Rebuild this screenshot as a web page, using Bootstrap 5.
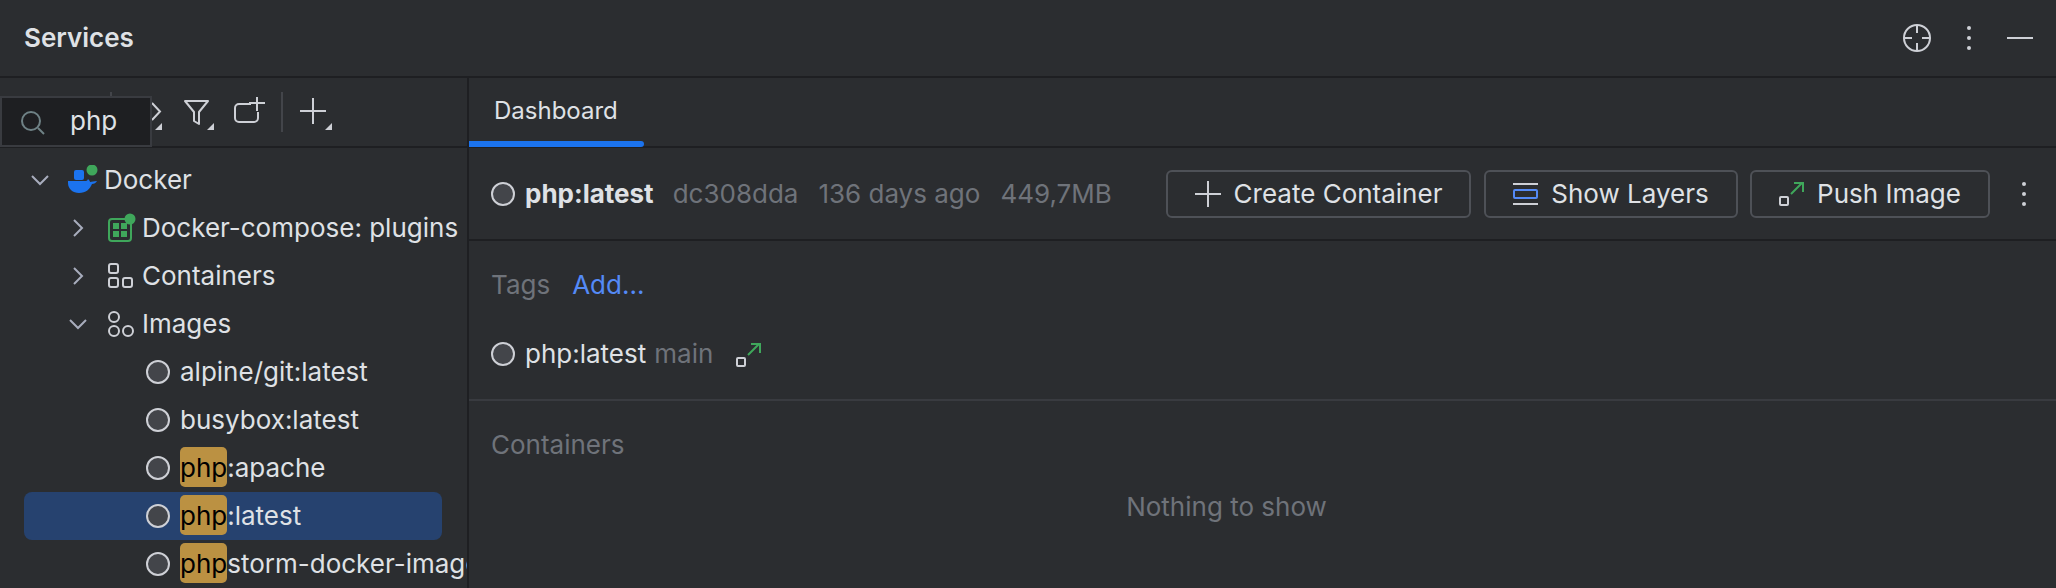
<!DOCTYPE html>
<html lang="en">
<head>
    <meta charset="UTF-8">
    <title>Services</title>
    <link href="https://cdn.jsdelivr.net/npm/bootstrap@5.3.0/dist/css/bootstrap.min.css" rel="stylesheet">
    <style>
        html, body { height: 100%; }
        body {
            background: #2b2d30;
            color: #dfe1e5;
            font-family: "Inter", "Liberation Sans", sans-serif;
            font-size: 26px;
            overflow: hidden;
        }
        svg { display: block; flex: none; }

        /* header */
        .tool-head { height: 78px; padding: 0 23px 0 24px; border-bottom: 2px solid #1e1f22; }
        .tool-title { font-size: 26px; font-weight: 600; padding-bottom: 2px; }
        .head-icons { gap: 35px; }

        /* left side */
        .side-pane { width: 469px; height: 510px; border-right: 2px solid #1e1f22; flex: none; overflow: hidden; position: relative; }
        .side-bar { height: 70px; border-bottom: 2px solid #1e1f22; padding-left: 110px; padding-top: 14px; }
        .side-sep { width: 2px; height: 40px; background: #43454a; }
        .quick-search {
            position: absolute; left: 0; top: 18px; width: 152px; height: 51px;
            background: #1e1f22; border: 2px solid #393b40;
        }
        .quick-search span { position: absolute; left: 68px; top: 3px; }
        .quick-search svg { position: absolute; left: 18px; top: 12px; }

        .tree-list { margin: 0; padding: 8px 0 0; list-style: none; white-space: nowrap; }
        .tree-item { height: 48px; display: flex; align-items: center; margin: 0 24px; border-radius: 8px; }
        .tree-item > span { margin-bottom: 2px; }
        .tree-item.is-active { background: #26426f; margin-right: 25px; }
        .lvl-0 { padding-left: 4px; }
        .lvl-1 { padding-left: 42px; }
        .lvl-2 { padding-left: 122px; }
        .tree-arrow { width: 24px; margin-right: 16px; }
        .lvl-1 .tree-arrow { margin-right: 18px; }
        .tree-icon { margin-right: 6px; }
        .lvl-2 .tree-icon { margin-right: 10px; }
        .hl { background: #bb9142; color: #000; border-radius: 5px; padding: 5px 0 4px; }

        /* right side */
        .main-pane { min-width: 0; }
        .tab-strip { height: 70px; border-bottom: 2px solid #1e1f22; position: relative; }
        .tab-name { display: block; padding: 15px 25px 0; font-size: 24px; }
        .tab-mark { position: absolute; left: 0; bottom: -1px; width: 175px; height: 6px; background: #1b73ee; border-radius: 0 3px 3px 0; }

        .img-head { height: 93px; padding: 0 29px 0 22px; border-bottom: 2px solid #1e1f22; }
        .dim { color: #6f737a; }
        .img-name { font-weight: 700; margin-left: 10px; margin-right: 19px; }
        .img-meta { margin-right: 20px; }
        .img-btn {
            height: 48px; padding: 0; font-size: 26px; color: #dfe1e5; background: transparent;
            border: 2px solid #4e5157; border-radius: 6px;
            display: flex; align-items: center; justify-content: center; gap: 13px;
        }
        .btn-create { width: 305px; margin-left: auto; }
        .btn-layers { width: 254px; margin-left: 13px; }
        .btn-push { width: 240px; margin-left: 12px; }
        .more-btn { margin-left: 31px; }

        .tags-part { height: 160px; padding: 0 22px 0 22px; border-bottom: 2px solid #393b40; }
        .tags-line { height: 88px; padding-bottom: 2px; }
        .tags-line a { margin-left: 22px; color: #548af7; text-decoration: none; }
        .tag-line { height: 48px; padding-top: 2px; }
        .tag-line > span { margin-bottom: 2px; }
        .tag-name { margin-left: 10px; margin-right: 8px; }
        .tag-push { margin-left: 23px; }

        .boxes-part { padding: 24px 22px 0; position: relative; }
        .empty-note { margin-top: 23px; padding-right: 72px; text-align: center; }
    </style>
</head>
<body>
    <header class="tool-head d-flex align-items-center justify-content-between">
        <div class="tool-title">Services</div>
        <div class="head-icons d-flex align-items-center">
            <svg width="28" height="28" viewBox="0 0 28 28" fill="none" stroke="#ced0d6" stroke-width="2"><circle cx="14" cy="14" r="13"/><path d="M14 1v8M14 19v8M1 14h8M19 14h8"/></svg>
            <svg width="6" height="24" viewBox="0 0 6 24" fill="#ced0d6"><circle cx="3" cy="2" r="2"/><circle cx="3" cy="12" r="2"/><circle cx="3" cy="22" r="2"/></svg>
            <svg width="26" height="4" viewBox="0 0 26 4" fill="#ced0d6"><rect width="26" height="2" y="1"/></svg>
        </div>
    </header>

    <div class="d-flex">
        <aside class="side-pane">
            <div class="side-bar d-flex">
                <div class="side-sep"></div>
                <svg class="ms-4" width="30" height="40" viewBox="0 0 30 40" fill="none" stroke="#ced0d6" stroke-width="2"><path d="M16 11l8 8.5-8 8.5"/><path d="M26 31v7h-7z" fill="#ced0d6" stroke="none"/></svg>
                <svg style="margin-left:12px" width="38" height="40" viewBox="0 0 38 40" fill="none" stroke="#ced0d6" stroke-width="2"><path d="M7 9h23l-9 11v12l-5-3v-9z" stroke-linejoin="round"/><path d="M36 31v7h-7z" fill="#ced0d6" stroke="none"/></svg>
                <svg style="margin-left:18px" width="32" height="40" viewBox="0 0 32 40" fill="none" stroke="#ced0d6" stroke-width="2"><path d="M17 12H5a4 4 0 0 0-4 4v10a4 4 0 0 0 4 4h15a4 4 0 0 0 4-4v-6"/><path d="M23 5v14M15 11h16"/></svg>
                <div class="side-sep" style="margin-left:15px"></div>
                <svg style="margin-left:17px" width="34" height="40" viewBox="0 0 34 40" fill="none" stroke="#ced0d6" stroke-width="2"><path d="M13 6v26M0 19h26"/><path d="M32 31v7h-7z" fill="#ced0d6" stroke="none"/></svg>
            </div>
            <div class="quick-search">
                <svg width="26" height="26" viewBox="0 0 26 26" fill="none" stroke="#6f8286" stroke-width="2"><circle cx="11" cy="11" r="9"/><path d="M18 18l6 6"/></svg>
                <span>php</span>
            </div>

            <ul class="tree-list">
                <li class="tree-item lvl-0">
                    <svg class="tree-arrow" height="24" viewBox="0 0 24 24" fill="none" stroke="#a8adbd" stroke-width="2"><path d="M4 8l8 8 8-8"/></svg>
                    <svg class="tree-icon" width="30" height="30" viewBox="0 0 30 30">
                        <rect x="6" y="5" width="10" height="10" rx="2" fill="#1b73ee"/>
                        <path d="M0 16h18c1 0 1.5-1 2-2 1 1 2 2 2 3 2-.5 4-.5 7-1-1 2-3 3-5 3-2 5-6 9-13 9C5 28 0 24 0 18z" fill="#1b73ee"/>
                        <circle cx="24" cy="5" r="5.5" fill="#3fa75b"/>
                    </svg>
                    <span>Docker</span>
                </li>
                <li class="tree-item lvl-1">
                    <svg class="tree-arrow" height="24" viewBox="0 0 24 24" fill="none" stroke="#a8adbd" stroke-width="2"><path d="M8 4l8 8-8 8"/></svg>
                    <svg class="tree-icon" width="28" height="30" viewBox="0 0 28 30">
                        <rect x="1" y="6" width="22" height="22" rx="3" fill="none" stroke="#3fa75b" stroke-width="2"/>
                        <path d="M5 10h6v6H5zM13 10h6v6h-6zM5 18h6v6H5zM13 18h6v6h-6z" fill="#3fa75b"/>
                        <circle cx="22" cy="6" r="5.5" fill="#3fa75b"/>
                    </svg>
                    <span>Docker-compose: plugins</span>
                </li>
                <li class="tree-item lvl-1">
                    <svg class="tree-arrow" height="24" viewBox="0 0 24 24" fill="none" stroke="#a8adbd" stroke-width="2"><path d="M8 4l8 8-8 8"/></svg>
                    <svg class="tree-icon" width="28" height="26" viewBox="0 0 28 26" fill="none" stroke="#ced0d6" stroke-width="2"><rect x="1" y="1" width="9" height="9" rx="2"/><rect x="1" y="15" width="9" height="9" rx="2"/><rect x="15" y="15" width="9" height="9" rx="2"/></svg>
                    <span>Containers</span>
                </li>
                <li class="tree-item lvl-1">
                    <svg class="tree-arrow" height="24" viewBox="0 0 24 24" fill="none" stroke="#a8adbd" stroke-width="2"><path d="M4 8l8 8 8-8"/></svg>
                    <svg class="tree-icon" width="28" height="26" viewBox="0 0 28 26" fill="none" stroke="#ced0d6" stroke-width="2"><circle cx="6" cy="6" r="5"/><circle cx="6" cy="20" r="5"/><circle cx="20" cy="20" r="5"/></svg>
                    <span>Images</span>
                </li>
                <li class="tree-item lvl-2">
                    <svg class="tree-icon" width="24" height="24" viewBox="0 0 24 24"><circle cx="12" cy="12" r="11" fill="#43454a" stroke="#ced0d6" stroke-width="2"/></svg>
                    <span>alpine/git:latest</span>
                </li>
                <li class="tree-item lvl-2">
                    <svg class="tree-icon" width="24" height="24" viewBox="0 0 24 24"><circle cx="12" cy="12" r="11" fill="#43454a" stroke="#ced0d6" stroke-width="2"/></svg>
                    <span>busybox:latest</span>
                </li>
                <li class="tree-item lvl-2">
                    <svg class="tree-icon" width="24" height="24" viewBox="0 0 24 24"><circle cx="12" cy="12" r="11" fill="#43454a" stroke="#ced0d6" stroke-width="2"/></svg>
                    <span><span class="hl">php</span>:apache</span>
                </li>
                <li class="tree-item lvl-2 is-active">
                    <svg class="tree-icon" width="24" height="24" viewBox="0 0 24 24"><circle cx="12" cy="12" r="11" fill="#43454a" stroke="#ced0d6" stroke-width="2"/></svg>
                    <span><span class="hl">php</span>:latest</span>
                </li>
                <li class="tree-item lvl-2">
                    <svg class="tree-icon" width="24" height="24" viewBox="0 0 24 24"><circle cx="12" cy="12" r="11" fill="#43454a" stroke="#ced0d6" stroke-width="2"/></svg>
                    <span><span class="hl">php</span>storm-docker-image</span>
                </li>
            </ul>
        </aside>

        <main class="main-pane flex-grow-1">
            <div class="tab-strip">
                <span class="tab-name">Dashboard</span>
                <div class="tab-mark"></div>
            </div>

            <div class="img-head d-flex align-items-center">
                <svg width="24" height="24" viewBox="0 0 24 24"><circle cx="12" cy="12" r="11" fill="#43454a" stroke="#ced0d6" stroke-width="2"/></svg>
                <span class="img-name">php:latest</span>
                <span class="img-meta dim">dc308dda</span>
                <span class="img-meta dim">136 days ago</span>
                <span class="dim">449,7MB</span>
                <button class="btn img-btn btn-create" type="button">
                    <svg width="26" height="26" viewBox="0 0 26 26" fill="none" stroke="#ced0d6" stroke-width="2"><path d="M13 0v26M0 13h26"/></svg>
                    Create Container
                </button>
                <button class="btn img-btn btn-layers" type="button">
                    <svg width="25" height="22" viewBox="0 0 25 22" fill="none" stroke-width="2"><path d="M0 1h25M0 21h25" stroke="#ced0d6"/><rect x="1" y="7" width="23" height="8" rx="1" stroke="#548af7"/></svg>
                    Show Layers
                </button>
                <button class="btn img-btn btn-push" type="button">
                    <svg width="25" height="25" viewBox="0 0 25 25" fill="none" stroke-width="2"><rect x="1" y="16" width="8" height="8" rx="1" stroke="#ced0d6"/><path d="M12 13L23 2M15 2h9v9" stroke="#3fa75b"/></svg>
                    Push Image
                </button>
                <svg class="more-btn" width="6" height="24" viewBox="0 0 6 24" fill="#ced0d6"><circle cx="3" cy="2" r="2"/><circle cx="3" cy="12" r="2"/><circle cx="3" cy="22" r="2"/></svg>
            </div>

            <section class="tags-part">
                <div class="tags-line d-flex align-items-center">
                    <span class="dim">Tags</span>
                    <a href="#">Add...</a>
                </div>
                <div class="tag-line d-flex align-items-center">
                    <svg width="24" height="24" viewBox="0 0 24 24"><circle cx="12" cy="12" r="11" fill="#43454a" stroke="#ced0d6" stroke-width="2"/></svg>
                    <span class="tag-name">php:latest</span>
                    <span class="dim">main</span>
                    <svg class="tag-push" width="25" height="25" viewBox="0 0 25 25" fill="none" stroke-width="2"><rect x="1" y="16" width="8" height="8" rx="1" stroke="#ced0d6"/><path d="M12 13L23 2M15 2h9v9" stroke="#3fa75b"/></svg>
                </div>
            </section>

            <section class="boxes-part">
                <div class="dim">Containers</div>
                <div class="empty-note dim">Nothing to show</div>
            </section>
        </main>
    </div>
</body>
</html>
